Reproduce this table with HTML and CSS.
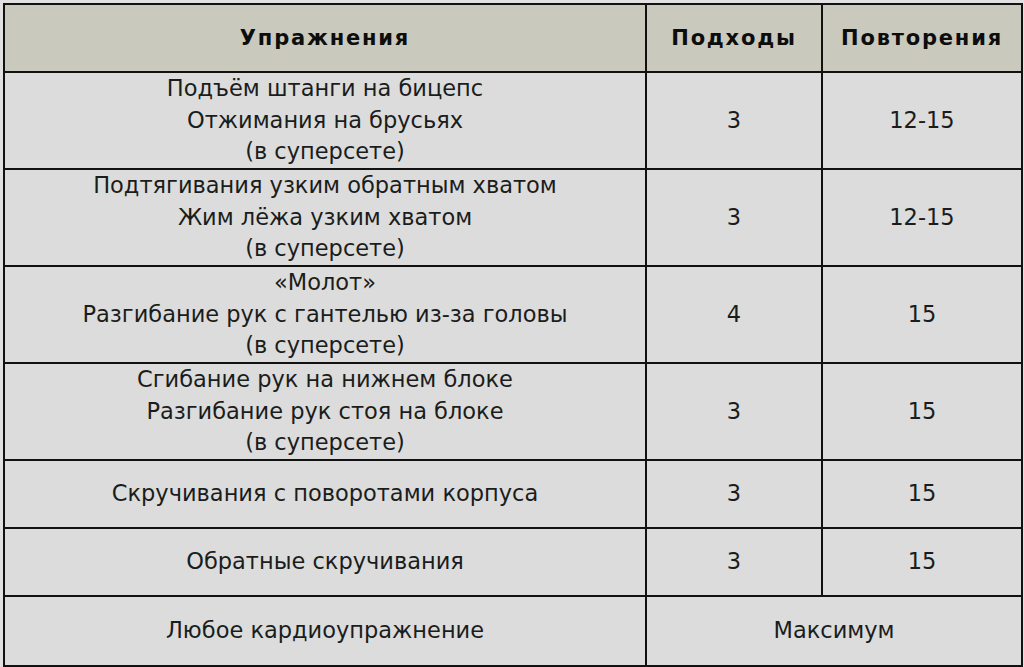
FILE: index.html
```html
<!DOCTYPE html>
<html lang="ru">
<head>
<meta charset="utf-8">
<title>Упражнения</title>
<link rel="stylesheet" href="styles.css">
</head>
<body>
<div class="page">
<table class="plan">
  <colgroup>
    <col class="c-ex">
    <col class="c-sets">
    <col class="c-reps">
  </colgroup>
  <thead>
    <tr class="r-head">
      <th>Упражнения</th>
      <th>Подходы</th>
      <th>Повторения</th>
    </tr>
  </thead>
  <tbody>
    <tr class="r-tall">
      <td>Подъём штанги на бицепс<br>Отжимания на брусьях<br>(в суперсете)</td>
      <td>3</td>
      <td>12-15</td>
    </tr>
    <tr class="r-tall">
      <td>Подтягивания узким обратным хватом<br>Жим лёжа узким хватом<br>(в суперсете)</td>
      <td>3</td>
      <td>12-15</td>
    </tr>
    <tr class="r-tall">
      <td>«Молот»<br>Разгибание рук с гантелью из-за головы<br>(в суперсете)</td>
      <td>4</td>
      <td>15</td>
    </tr>
    <tr class="r-tall">
      <td>Сгибание рук на нижнем блоке<br>Разгибание рук стоя на блоке<br>(в суперсете)</td>
      <td>3</td>
      <td>15</td>
    </tr>
    <tr class="r-short">
      <td>Скручивания с поворотами корпуса</td>
      <td>3</td>
      <td>15</td>
    </tr>
    <tr class="r-short">
      <td>Обратные скручивания</td>
      <td>3</td>
      <td>15</td>
    </tr>
    <tr class="r-last">
      <td>Любое кардиоупражнение</td>
      <td colspan="2">Максимум</td>
    </tr>
  </tbody>
</table>
</div>
</body>
</html>
```
FILE: styles.css
```css
html, body {
  margin: 0;
  padding: 0;
  background: #e1e1e1;
}
.page {
  padding: 3px 3px 0 3px;
}
.plan {
  width: 1018px;
  border-collapse: collapse;
  table-layout: fixed;
  font-family: "DejaVu Sans", Verdana, sans-serif;
  font-size: 22.5px;
  color: #1a1d1b;
}
.c-ex { width: 642px; }
.c-sets { width: 176px; }
.c-reps { width: 200px; }
.plan th, .plan td {
  border: 2px solid #111;
  text-align: center;
  vertical-align: middle;
  padding: 0;
}
.plan th {
  background: #c9c9bd;
  font-weight: bold;
  font-size: 21px;
  letter-spacing: 1.8px;
  color: #0d0d0d;
}
.plan td {
  background: #dcdcdc;
  line-height: 31.5px;
}
.r-head { height: 68px; }
.r-tall { height: 97px; }
.r-short { height: 68px; }
.r-last { height: 70px; }
```
